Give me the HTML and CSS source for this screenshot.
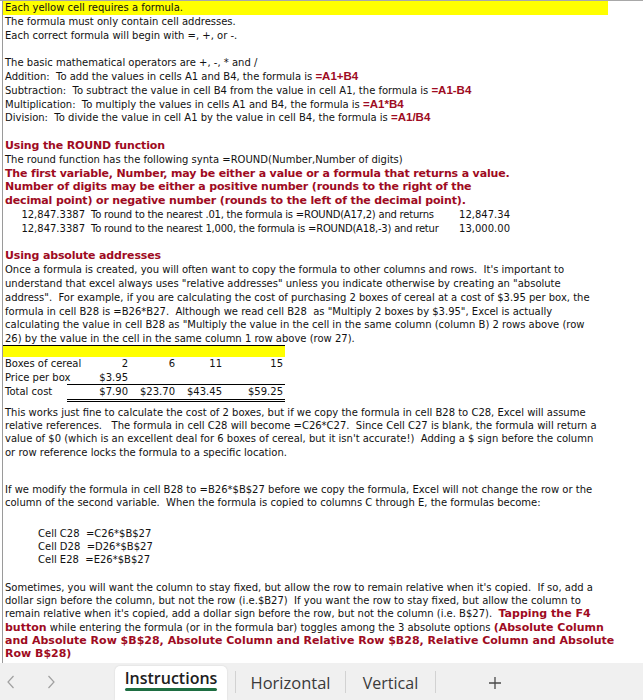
FILE: index.html
```html
<!DOCTYPE html>
<html>
<head>
<meta charset="utf-8">
<link rel="stylesheet" href="styles.css">
</head>
<body>
<div class="page">
  <div class="sheet">
    <div class="r yrow">Each yellow cell requires a formula.</div>
    <div class="r">The formula must only contain cell addresses.</div>
    <div class="r">Each correct formula will begin with =, +, or -.</div>
    <div class="r"></div>
    <div class="r">The basic mathematical operators are +, -, * and /</div>
    <div class="r">Addition:  To add the values in cells A1 and B4, the formula is <span class="f">=A1+B4</span></div>
    <div class="r">Subtraction:  To subtract the value in cell B4 from the value in cell A1, the formula is <span class="f">=A1-B4</span></div>
    <div class="r">Multiplication:  To multiply the values in cells A1 and B4, the formula is <span class="f">=A1*B4</span></div>
    <div class="r">Division:  To divide the value in cell A1 by the value in cell B4, the formula is <span class="f">=A1/B4</span></div>
    <div class="r"></div>
    <div class="r b">Using the ROUND function</div>
    <div class="r">The round function has the following synta =ROUND(Number,Number of digits)</div>
    <div class="r b">The first variable, Number, may be either a value or a formula that returns a value.</div>
    <div class="r b">Number of digits may be either a positive number (rounds to the right of the</div>
    <div class="r b">decimal point) or negative number (rounds to the left of the decimal point).</div>
    <div class="r rr"><span class="n1">12,847.3387</span><span class="tx">To round to the nearest .01, the formula is =ROUND(A17,2) and returns</span><span class="n2">12,847.34</span></div>
    <div class="r rr"><span class="n1">12,847.3387</span><span class="tx">To round to the nearest 1,000, the formula is =ROUND(A18,-3) and retur</span><span class="n2">13,000.00</span></div>
    <div class="r"></div>
    <div class="r b">Using absolute addresses</div>
    <div class="para1">
      <div class="l">Once a formula is created, you will often want to copy the formula to other columns and rows.  It's important to</div>
      <div class="l">understand that excel always uses "relative addresses" unless you indicate otherwise by creating an "absolute</div>
      <div class="l">address".  For example, if you are calculating the cost of purchasing 2 boxes of cereal at a cost of $3.95 per box, the</div>
      <div class="l">formula in cell B28 is =B26*B27.  Although we read cell B28  as "Multiply 2 boxes by $3.95", Excel is actually</div>
      <div class="l">calculating the value in cell B28 as "Multiply the value in the cell in the same column (column B) 2 rows above (row</div>
      <div class="l">26) by the value in the cell in the same column 1 row above (row 27).</div>
    </div>
    <div class="ycell"></div>
    <div class="tbl">
      <div class="c lab">Boxes of cereal</div><div class="c">2</div><div class="c">6</div><div class="c">11</div><div class="c">15</div>
      <div class="c lab">Price per box</div><div class="c">$3.95</div><div class="c"></div><div class="c"></div><div class="c"></div>
      <div class="c lab lab3">Total cost</div><div class="c tot">$7.90</div><div class="c tot">$23.70</div><div class="c tot">$43.45</div><div class="c tot">$59.25</div>
    </div>
    <div class="para2">
      <div class="l">This works just fine to calculate the cost of 2 boxes, but if we copy the formula in cell B28 to C28, Excel will assume</div>
      <div class="l">relative references.   The formula in cell C28 will become =C26*C27.  Since Cell C27 is blank, the formula will return a</div>
      <div class="l">value of $0 (which is an excellent deal for 6 boxes of cereal, but it isn't accurate!)  Adding a $ sign before the column</div>
      <div class="l">or row reference locks the formula to a specific location.</div>
    </div>
    <div class="para3">
      <div class="l">If we modify the formula in cell B28 to =B26*$B$27 before we copy the formula, Excel will not change the row or the</div>
      <div class="l">column of the second variable.  When the formula is copied to columns C through E, the formulas become:</div>
    </div>
    <div class="para4">
      <div class="l">Cell C28  =C26*$B$27</div>
      <div class="l">Cell D28  =D26*$B$27</div>
      <div class="l">Cell E28  =E26*$B$27</div>
    </div>
    <div class="para5">
      <div class="l">Sometimes, you will want the column to stay fixed, but allow the row to remain relative when it's copied.  If so, add a</div>
      <div class="l">dollar sign before the column, but not the row (i.e.$B27)  If you want the row to stay fixed, but allow the column to</div>
      <div class="l">remain relative when it's copied, add a dollar sign before the row, but not the column (i.e. B$27).  <span class="bi">Tapping the F4</span></div>
      <div class="l"><span class="bi">button</span> while entering the formula (or in the formula bar) toggles among the 3 absolute options <span class="bi">(Absolute Column</span></div>
      <div class="l"><span class="bi">and Absolute Row $B$28, Absolute Column and Relative Row $B28, Relative Column and Absolute</span></div>
      <div class="l"><span class="bi">Row B$28)</span></div>
    </div>
  </div>
  <div class="tabs">
    <div class="nav">
      <svg class="chev" width="8" height="14" viewBox="0 0 8 14"><polyline points="6.5,1 1,7 6.5,13" fill="none" stroke="#a0a0a0" stroke-width="1.2"/></svg>
      <svg class="chev chev2" width="8" height="14" viewBox="0 0 8 14"><polyline points="1.5,1 7,7 1.5,13" fill="none" stroke="#a0a0a0" stroke-width="1.2"/></svg>
    </div>
    <div class="tab active"><span class="tl">Instructions</span><span class="ul"></span></div>
    <div class="sep s1"></div>
    <div class="tab t-h">Horizontal</div>
    <div class="sep"></div>
    <div class="tab t-v">Vertical</div>
    <div class="sep"></div>
    <div class="plus">
      <svg width="14" height="14" viewBox="0 0 14 14"><path d="M7 1V13M1 7H13" stroke="#4a4a4a" stroke-width="1.3" fill="none"/></svg>
    </div>
  </div>
</div>
</body>
</html>
```

FILE: styles.css
```css
html, body {
  margin: 0;
  padding: 0;
  background: #fff;
}
body {
  width: 643px;
  height: 700px;
  overflow: hidden;
  font-family: "DejaVu Sans", sans-serif;
  font-size: 10px;
  color: #111;
}
.page {
  border-top: 1px solid #a8a8a8;
}
.sheet {
  height: 662px;
  margin-left: 2px;
  border-left: 1px solid #9a9a9a;
  overflow: hidden;
}
.r {
  height: 13.8px;
  line-height: 13.8px;
  padding-left: 2px;
  white-space: pre;
  overflow: visible;
}
.yrow {
  width: 605px;
  box-sizing: border-box;
  background: #ffff00;
}
.b {
  font-weight: bold;
  font-size: 11px;
  letter-spacing: -0.15px;
  color: #9e0b22;
}
.f {
  font-family: "Liberation Sans", Arial, sans-serif;
  font-weight: bold;
  font-size: 11.5px;
  color: #9e0b22;
}
.rr {
  display: grid;
  grid-template-columns: 84px 355px 70px;
  padding-left: 0;
}
.n1 {
  text-align: right;
  padding-right: 2px;
}
.tx {
  padding-left: 4px;
  overflow: hidden;
  letter-spacing: -0.22px;
}
.n2 {
  text-align: right;
  padding-right: 2px;
}
.l {
  white-space: pre;
  padding-left: 2px;
}
.para1 {
  height: 82px;
  line-height: 13.8px;
}
.ycell {
  width: 282px;
  height: 11px;
  background: #ffff00;
  border-top: 1px solid #000;
}
.tbl {
  display: grid;
  grid-template-columns: 64px 63px 47px 47px 61px;
  grid-template-rows: 13.5px 13.5px 17.5px;
  line-height: 13.5px;
  width: 282px;
}
.c {
  text-align: right;
  padding-right: 2px;
  white-space: pre;
}
.lab {
  text-align: left;
  padding-left: 2px;
  padding-right: 0;
}
.lab3 {
  padding-top: 1px;
}
.tot {
  border-top: 1px solid #000;
  border-bottom: 3px double #000;
}
.para2 {
  margin-top: 4px;
  line-height: 13.3px;
}
.para3 {
  margin-top: 24px;
  line-height: 13.5px;
}
.para4 {
  margin-top: 17px;
  line-height: 13px;
}
.para4 .l {
  padding-left: 35px;
}
.para5 {
  margin-top: 15px;
  line-height: 13.3px;
}
.bi {
  font-weight: bold;
  font-size: 11px;
  color: #9e0b22;
}
.tabs {
  height: 37px;
  background: #f0f0f0;
  display: flex;
  font-family: "Open Sans", "Noto Sans", sans-serif;
  font-size: 16px;
  color: #3a3a3a;
}
.nav {
  width: 115px;
  display: flex;
  align-items: flex-start;
}
.chev {
  margin-top: 12px;
  margin-left: 7px;
}
.chev2 {
  margin-left: 32px;
}
.tab {
  line-height: 20px;
  white-space: nowrap;
  text-align: center;
}
.active {
  width: 112px;
  margin-top: 3px;
  background: #fff;
  border-radius: 5px 5px 0 0;
  box-shadow: 0 0 2px rgba(0, 0, 0, 0.12);
  display: flex;
  flex-direction: column;
  align-items: center;
  padding-top: 2px;
  box-sizing: border-box;
  color: #202020;
  font-weight: 600;
}
.ul {
  width: 92px;
  height: 3px;
  border-radius: 2px;
  background: #1e6e42;
}
.sep {
  width: 1px;
  height: 22px;
  margin-top: 8px;
  background: #d2d2d2;
}
.s1 {
  margin-left: 8px;
}
.t-h {
  width: 109px;
  padding-top: 10px;
  font-size: 16.5px;
}
.t-v {
  width: 89px;
  padding-top: 10px;
}
.plus {
  margin-left: 52px;
  margin-top: 13px;
}
.plus svg {
  display: block;
}
```
